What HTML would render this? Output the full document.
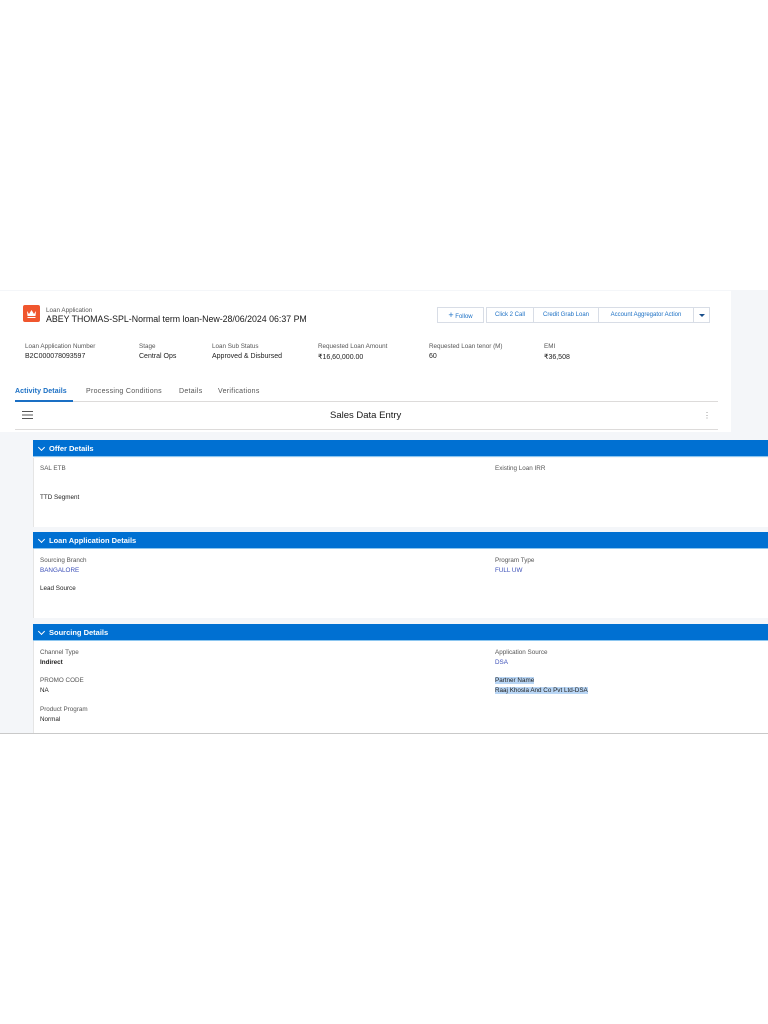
<!DOCTYPE html>
<html><head><meta charset="utf-8"><style>
*{margin:0;padding:0;box-sizing:border-box}
body{width:768px;height:1024px;background:#fff;font-family:"Liberation Sans",sans-serif;position:relative;overflow:hidden;color:#181818}
.a{position:absolute;white-space:nowrap}
.s{font-size:6.3px;color:#555}
.v{font-size:7px;color:#222}
.lnk{color:#3b4fb8}
.btn{position:absolute;top:307px;height:16px;border:1px solid #d8dde6;background:#fff;color:#1a6fc4;font-size:6px;line-height:15px;text-align:center}
.hd{position:absolute;left:33px;width:735px;height:17px;background:#0070d2;color:#fff;font-size:7.5px;font-weight:bold;line-height:17px;padding-left:16px;border-bottom:1px solid #8cc6f0}
.hd:before{content:"";position:absolute;left:6px;top:5px;width:4px;height:4px;border-right:1.2px solid #fff;border-bottom:1.2px solid #fff;transform:rotate(45deg)}
.bd{position:absolute;left:33px;width:735px;background:#fff;border-left:1px solid #e5e5e5}
.tab{position:absolute;top:388px;font-size:7px;color:#555;letter-spacing:0.3px;white-space:nowrap}
</style></head><body>
<div class="a" style="left:0;top:290px;width:768px;height:444px;background:#f4f6f9;border-bottom:1px solid #c9c9c9"></div>
<div class="a" style="left:0;top:291px;width:731px;height:141px;background:#fff"></div>
<div class="a" style="left:23px;top:305px;width:17px;height:17px;background:#f0562e;border-radius:2px"></div>
<svg class="a" style="left:26px;top:308px" width="11" height="11" viewBox="0 0 11 11"><path d="M1 3 L3 6 L5.5 2 L8 6 L10 3 L9.5 8 L1.5 8Z M1.5 9h8v1h-8z" fill="#fff"/></svg>
<div class="a s" style="left:46px;top:307px">Loan Application</div>
<div class="a" style="left:46px;top:314px;font-size:8.8px;color:#181818">ABEY THOMAS-SPL-Normal term loan-New-28/06/2024 06:37 PM</div>
<div class="btn" style="left:437px;width:47px"><span style="font-size:9px;color:#1a6fc4">+</span> Follow</div>
<div class="btn" style="left:486px;width:48px">Click 2 Call</div>
<div class="btn" style="left:533px;width:66px">Credit Grab Loan</div>
<div class="btn" style="left:598px;width:96px">Account Aggregator Action</div>
<div class="btn" style="left:693px;width:17px"><span style="display:inline-block;border-left:3px solid transparent;border-right:3px solid transparent;border-top:3.5px solid #1a4f8c;vertical-align:middle;margin-top:2px"></span></div>
<div class="a s" style="left:25px;top:343px">Loan Application Number</div><div class="a v" style="left:25px;top:353px">B2C000078093597</div>
<div class="a s" style="left:139px;top:343px">Stage</div><div class="a v" style="left:139px;top:353px">Central Ops</div>
<div class="a s" style="left:212px;top:343px">Loan Sub Status</div><div class="a v" style="left:212px;top:353px">Approved &amp; Disbursed</div>
<div class="a s" style="left:318px;top:343px">Requested Loan Amount</div><div class="a v" style="left:318px;top:353px">₹16,60,000.00</div>
<div class="a s" style="left:429px;top:343px">Requested Loan tenor (M)</div><div class="a v" style="left:429px;top:353px">60</div>
<div class="a s" style="left:544px;top:343px">EMI</div><div class="a v" style="left:544px;top:353px">₹36,508</div>
<div class="tab" style="left:15px;color:#1a6fc4;font-weight:bold;letter-spacing:0.1px">Activity Details</div>
<div class="tab" style="left:86px">Processing Conditions</div>
<div class="tab" style="left:179px">Details</div>
<div class="tab" style="left:218px">Verifications</div>
<div class="a" style="left:15px;top:401px;width:703px;height:1px;background:#dddbda"></div>
<div class="a" style="left:15px;top:400px;width:58px;height:2px;background:#1a6fc4"></div>
<div class="a" style="left:22px;top:411px;width:11px;height:1.3px;background:#555;box-shadow:0 3.5px 0 #555,0 7px 0 #555"></div>
<div class="a" style="left:330px;top:410px;font-size:9.5px;color:#181818">Sales Data Entry</div>
<div class="a" style="left:703px;top:411px;font-size:8px;color:#888">⋮</div>
<div class="a" style="left:15px;top:429px;width:703px;height:1px;background:#dddbda"></div>

<div class="bd" style="top:458px;height:69px"></div>
<div class="hd" style="top:440px">Offer Details</div>
<div class="a s" style="left:40px;top:465px">SAL ETB</div>
<div class="a s" style="left:495px;top:465px">Existing Loan IRR</div>
<div class="a s" style="left:40px;top:494px;color:#222">TTD Segment</div>

<div class="bd" style="top:549px;height:69px"></div>
<div class="hd" style="top:532px">Loan Application Details</div>
<div class="a s" style="left:40px;top:557px">Sourcing Branch</div>
<div class="a s lnk" style="left:40px;top:567px">BANGALORE</div>
<div class="a s" style="left:495px;top:557px">Program Type</div>
<div class="a s lnk" style="left:495px;top:567px">FULL UW</div>
<div class="a s" style="left:40px;top:585px;color:#222">Lead Source</div>

<div class="bd" style="top:641px;height:92px"></div>
<div class="hd" style="top:624px">Sourcing Details</div>
<div class="a s" style="left:40px;top:649px">Channel Type</div>
<div class="a s" style="left:40px;top:659px;color:#222;font-weight:bold">Indirect</div>
<div class="a s" style="left:40px;top:677px">PROMO CODE</div>
<div class="a s" style="left:40px;top:687px;color:#222">NA</div>
<div class="a s" style="left:40px;top:706px">Product Program</div>
<div class="a s" style="left:40px;top:716px;color:#222">Normal</div>
<div class="a s" style="left:495px;top:649px">Application Source</div>
<div class="a s lnk" style="left:495px;top:659px">DSA</div>
<div class="a s" style="left:495px;top:677px;color:#222;background:#b9d6f5">Partner Name</div>
<div class="a s" style="left:495px;top:687px;color:#222;background:#b9d6f5">Raaj Khosla And Co Pvt Ltd-DSA</div>
</body></html>
